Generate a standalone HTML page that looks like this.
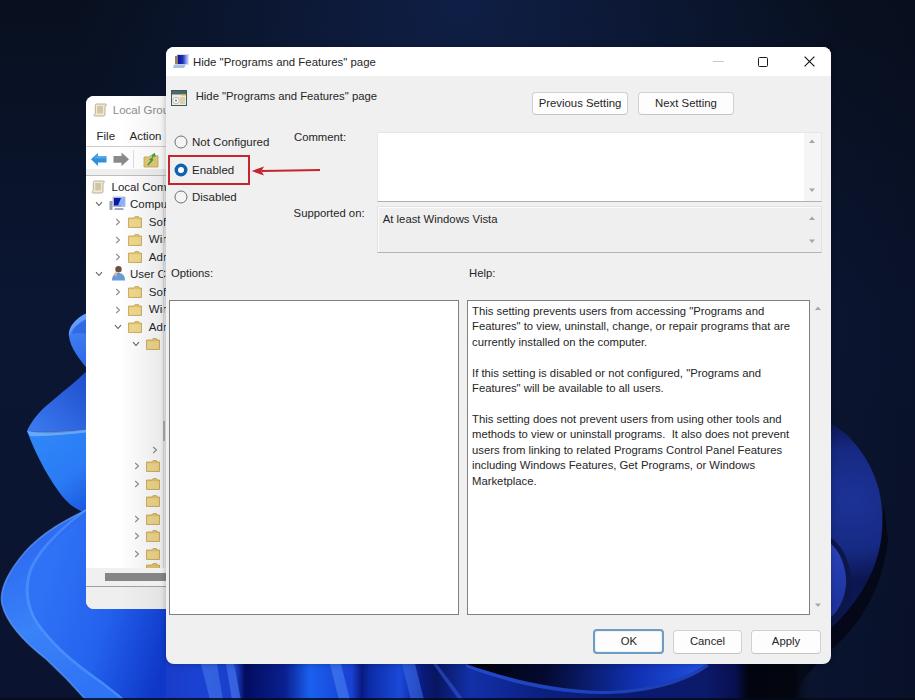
<!DOCTYPE html>
<html><head><meta charset="utf-8">
<style>
*{margin:0;padding:0;box-sizing:border-box}
html,body{width:915px;height:700px;overflow:hidden}
body{position:relative;background:#0a1529;font-family:"Liberation Sans",sans-serif;font-size:11px;color:#262626}
.a{position:absolute}
.t{position:absolute;white-space:nowrap;line-height:15px;height:15px}
#wall{position:absolute;left:0;top:0}
#back{position:absolute;left:86px;top:96px;width:200px;height:513px;background:#fff;border-radius:8px;overflow:hidden}
#dlg{position:absolute;left:166px;top:47px;width:665px;height:617px;background:#f0f0f0;border-radius:8px;overflow:hidden;box-shadow:0 0 6px rgba(0,0,0,.25)}
.btn{position:absolute;background:#fdfdfd;border:1px solid #d0d0d0;border-bottom-color:#c4c4c4;border-radius:4px}
.radio{position:absolute;width:13px;height:13px;border-radius:50%;border:1px solid #8a8a8a;background:#f6f6f6}
</style></head><body>
<svg id="wall" width="915" height="700" viewBox="0 0 915 700">
<defs>
<linearGradient id="bg" x1="0" y1="0" x2="0" y2="700" gradientUnits="userSpaceOnUse">
<stop offset="0" stop-color="#08101f"/><stop offset="0.45" stop-color="#0b1633"/><stop offset="1" stop-color="#0a1430"/></linearGradient>
<radialGradient id="bgc" cx="460" cy="0" r="380" gradientUnits="userSpaceOnUse">
<stop offset="0" stop-color="#10204a" stop-opacity="0.9"/><stop offset="1" stop-color="#10204a" stop-opacity="0"/></radialGradient>
<linearGradient id="bgr" x1="800" y1="0" x2="915" y2="0" gradientUnits="userSpaceOnUse">
<stop offset="0" stop-color="#060c1a" stop-opacity="0"/><stop offset="1" stop-color="#060c1a" stop-opacity="0.35"/></linearGradient>
<linearGradient id="pa" x1="70" y1="315" x2="90" y2="370" gradientUnits="userSpaceOnUse">
<stop offset="0" stop-color="#4a88f5"/><stop offset="1" stop-color="#2a66e8"/></linearGradient>
<linearGradient id="pb" x1="90" y1="375" x2="35" y2="430" gradientUnits="userSpaceOnUse">
<stop offset="0" stop-color="#1f4ecc"/><stop offset="1" stop-color="#3a78ee"/></linearGradient>
<linearGradient id="pbody" x1="35" y1="440" x2="90" y2="505" gradientUnits="userSpaceOnUse">
<stop offset="0" stop-color="#2f86f8"/><stop offset="0.6" stop-color="#2a7af5"/><stop offset="1" stop-color="#1c5ae0"/></linearGradient>
<linearGradient id="rib" x1="0" y1="560" x2="60" y2="700" gradientUnits="userSpaceOnUse">
<stop offset="0" stop-color="#2e6cf2"/><stop offset="0.5" stop-color="#3a82f8"/><stop offset="1" stop-color="#2f74f5"/></linearGradient>
<linearGradient id="ribin" x1="40" y1="600" x2="170" y2="640" gradientUnits="userSpaceOnUse">
<stop offset="0" stop-color="#2f72f5"/><stop offset="0.5" stop-color="#2462ee"/><stop offset="1" stop-color="#0f38c8"/></linearGradient>
<radialGradient id="sph" cx="852" cy="500" r="80" gradientUnits="userSpaceOnUse">
<stop offset="0" stop-color="#1c3398"/><stop offset="0.65" stop-color="#162982"/><stop offset="1" stop-color="#0c1650"/></radialGradient>
<linearGradient id="lobe" x1="831" y1="550" x2="846" y2="600" gradientUnits="userSpaceOnUse">
<stop offset="0" stop-color="#2a42b8"/><stop offset="1" stop-color="#1e34a0"/></linearGradient>
<linearGradient id="lens" x1="480" y1="664" x2="700" y2="680" gradientUnits="userSpaceOnUse">
<stop offset="0" stop-color="#01030e"/><stop offset="0.3" stop-color="#040a30"/><stop offset="0.7" stop-color="#1030b0"/><stop offset="1" stop-color="#2050e0"/></linearGradient>
<linearGradient id="bot" x1="166" y1="0" x2="915" y2="0" gradientUnits="userSpaceOnUse"><stop offset="0.0000" stop-color="#1a3cc8"/><stop offset="0.0454" stop-color="#1a42d2"/><stop offset="0.0935" stop-color="#1a40c8"/><stop offset="0.1055" stop-color="#030c60"/><stop offset="0.1589" stop-color="#0a2090"/><stop offset="0.1923" stop-color="#1a60f0"/><stop offset="0.2190" stop-color="#1a50e0"/><stop offset="0.2483" stop-color="#1a40d0"/><stop offset="0.2617" stop-color="#081a80"/><stop offset="0.2724" stop-color="#0c2ca8"/><stop offset="0.3124" stop-color="#1a4ad8"/><stop offset="0.3418" stop-color="#0a1a80"/><stop offset="0.3605" stop-color="#081660"/><stop offset="0.4059" stop-color="#1230a8"/><stop offset="0.4993" stop-color="#0c2080"/><stop offset="0.6328" stop-color="#0a1a70"/><stop offset="0.7196" stop-color="#0c1a6a"/><stop offset="0.7597" stop-color="#081050"/><stop offset="0.7770" stop-color="#02040f"/><stop offset="0.8398" stop-color="#03060f"/><stop offset="0.8625" stop-color="#0b1526" stop-opacity="0"/><stop offset="1.0000" stop-color="#0b1526" stop-opacity="0"/></linearGradient>
</defs>
<rect width="915" height="700" fill="url(#bg)"/>
<rect width="915" height="400" fill="url(#bgc)"/>
<rect x="800" width="115" height="700" fill="url(#bgr)"/>
<!-- right sphere -->
<path d="M831 560 C860 560 884 530 884 505 L888 540 C882 590 860 625 831 650 C815 664 800 682 790 700 L760 700 C780 680 805 660 831 640 Z" fill="#040818"/>
<path d="M831 424 C852 434 872 462 879 490 C886 522 882 554 868 580 C858 600 844 616 831 628 Z" fill="url(#sph)"/>
<path d="M831 538 C846 548 853 572 851 590 C849 606 841 618 831 626 Z" fill="#0c1648"/>
<path d="M831 544 C841 552 847 570 846 585 C845 598 839 610 831 617 Z" fill="url(#lobe)"/>
<!-- petal A -->
<path d="M90 312 C78 316 68 326 69 336 C70 348 80 360 90 372 Z" fill="url(#pa)"/>
<path d="M90 312 C78 316 68 326 69 336 C72 328 80 320 90 318 Z" fill="#6aa4ff" opacity="0.8"/>
<path d="M90 318 C80 322 73 328 72 334 C78 332 85 333 90 336 Z" fill="#2a5cd8" opacity="0.6"/>
<!-- petal B top face -->
<path d="M90 368 C78 380 60 394 46 406 C36 415 30 424 27 431 C45 433 70 431 90 429 Z" fill="url(#pb)"/>
<!-- petal B body -->
<path d="M27 431 C45 435 70 433 90 429 L90 514 C80 512 70 506 62 496 C50 480 38 460 27 431 Z" fill="url(#pbody)"/>
<path d="M27 431 C45 433 70 431 90 429 L90 432 C70 434 45 437 30 436 Z" fill="#7ab4ff" opacity="0.75"/>
<!-- big ribbon -->
<path d="M200 480 L86 510 C70 518 45 530 25 552 C8 572 -1 590 2 604 C6 622 24 642 45 658 C58 670 72 684 86 700 L260 700 Z" fill="url(#rib)"/>
<path d="M200 480 L86 518 C66 530 42 548 32 570 C26 588 28 606 38 622 C52 642 72 660 96 677 C106 684 116 692 125 700 L260 700 Z" fill="url(#ribin)"/>
<path d="M86 511 C66 526 42 548 32 570 C26 588 28 606 38 622 C52 642 72 660 96 677 C106 684 116 692 125 700 L122 700 C112 692 102 684 93 678 C68 660 48 642 35 622 C25 606 23 588 29 570 C38 548 62 526 86 509 Z" fill="#5a9cff" opacity="0.55"/>
<path d="M86 510 C70 518 45 530 25 552 C8 572 -1 590 2 604 C6 622 24 642 45 658 C58 670 72 684 86 700" fill="none" stroke="#6aa6ff" stroke-width="1.6" opacity="0.6"/>
<!-- bottom strip -->
<rect x="166" y="660" width="749" height="40" fill="url(#bot)"/>
<path d="M201 664 L217 664 L223 700 L210 700 Z" fill="#3f6fe6" opacity="0.7"/>
<path d="M226 664 L234 664 L241 700 L232 700 Z" fill="#4a7aee" opacity="0.6"/>
<path d="M330 664 L341 664 L350 700 L339 700 Z" fill="#4a80f2" opacity="0.6"/>
<path d="M402 664 L415 664 L424 700 L411 700 Z" fill="#3a6ae8" opacity="0.6"/>
<path d="M433 664 L437 664 L464 700 L459 700 Z" fill="#3a60e0" opacity="0.5"/>
<path d="M466 664 C500 676 550 690 602 691 C640 691 680 682 707 664 Z" fill="url(#lens)"/>
<path d="M466 664 C500 676 550 690 602 691 C640 691 680 682 707 664 L709 666 C682 686 640 694 602 694 C550 694 500 680 466 667 Z" fill="#3060f0" opacity="0.55"/>
<rect x="0" y="698" width="915" height="2" fill="#050a18" opacity="0.8"/>
</svg>

<div id="back">
  <div class="a" style="left:0px;top:0px;width:200px;height:51px;background:#fff"></div>
  <svg class="a" style="left:7px;top:7px" width="15" height="14" viewBox="0 0 15 14"><path d="M3.5 1 H12.5 C13.5 1 13.8 2.2 12.8 2.8 L12 3.2 V11.5 C12 12.5 11.2 13 10.5 13 H2 C1 13 0.7 11.8 1.6 11.2 L2.3 10.8 V2.5 C2.3 1.6 2.8 1 3.5 1 Z" fill="#f2ead0" stroke="#a8a088" stroke-width="0.8"/><rect x="4.2" y="3" width="5.8" height="7.5" fill="#cfc6a8"/></svg>
  <div class="t" style="left:26.8px;top:6.9px;font-size:11.5px;color:#8e8e8e">Local Group Policy Editor</div>
  <div class="t" style="left:10.5px;top:32.9px;font-size:11.5px">File</div>
  <div class="t" style="left:43.5px;top:32.9px;font-size:11.5px">Action</div>
  <div class="a" style="left:0px;top:50px;width:200px;height:1px;background:#cfcfcf"></div>
  <div class="a" style="left:0px;top:51px;width:200px;height:22px;background:#fff"></div>
  <div class="a" style="left:0px;top:73px;width:200px;height:6px;background:#efefef"></div>
  <div class="a" style="left:0px;top:79px;width:200px;height:1px;background:#bdbdbd"></div>
  <svg class="a" style="left:4px;top:56px" width="18" height="15" viewBox="0 0 18 15"><path d="M1 7.3 L8 1 V4.3 H16.5 V10.5 H8 V14 Z" fill="#2f8fdc"/><path d="M8 4.3 H16.5 V6.5 H3.5 L8 2.5 Z" fill="#5ab4f0" opacity="0.7"/></svg>
  <svg class="a" style="left:26px;top:56px" width="18" height="15" viewBox="0 0 18 15"><path d="M17 7.3 L9.5 0.6 V4 H1.5 V10.8 H9.5 V14.2 Z" fill="#8a8a8a"/></svg>
  <div class="a" style="left:47px;top:54px;width:1px;height:18px;background:#dedede"></div>
  <svg class="a" style="left:57px;top:56px" width="16" height="16" viewBox="0 0 16 16"><path d="M1 5 H6 L7 3.8 H15 V15 H1 Z" fill="#e6c877" stroke="#c4a650" stroke-width="0.8"/><path d="M4 13 L7.5 8.5 L6 7.5 L9.5 5 L8.5 3 L12 0.8 L12.5 5 L10.8 4.2 L9.5 7 L10.5 7.8 L5.5 13.5 Z" fill="#36a83e"/></svg>
  <svg class="a" style="left:5px;top:84px" width="15" height="14" viewBox="0 0 15 14"><path d="M3.5 1 H12.5 C13.5 1 13.8 2.2 12.8 2.8 L12 3.2 V11.5 C12 12.5 11.2 13 10.5 13 H2 C1 13 0.7 11.8 1.6 11.2 L2.3 10.8 V2.5 C2.3 1.6 2.8 1 3.5 1 Z" fill="#f2ead0" stroke="#a8a088" stroke-width="0.8"/><rect x="4.2" y="3" width="5.8" height="7.5" fill="#cfc6a8"/></svg>
  <div class="t" style="left:25.5px;top:83.7px;font-size:11.5px">Local Computer Policy</div>
  <svg class="a" style="left:9px;top:105.4px" width="8" height="6" viewBox="0 0 8 6"><path d="M1 1.2 L4 4.5 L7 1.2" fill="none" stroke="#606060" stroke-width="1.1"/></svg>
  <svg class="a" style="left:23px;top:100px" width="17" height="15" viewBox="0 0 17 15"><rect x="0.5" y="5" width="3" height="9" fill="#9aa0b0"/><rect x="4" y="1" width="12" height="9.5" fill="#b8c8f0" stroke="#8898c8" stroke-width="0.6"/><rect x="5" y="2" width="7" height="7.5" fill="#0a1aa0"/><path d="M12 2 L15.5 2 V9.5 H9 Z" fill="#8ab0ff"/><path d="M6 12 H14 L15 14 H5 Z" fill="#a0a8c0"/></svg>
  <div class="t" style="left:44.0px;top:101.2px;font-size:11.5px">Computer Configuration</div>
  <svg class="a" style="left:29px;top:122.19999999999999px" width="6" height="8" viewBox="0 0 6 8"><path d="M1.2 1 L4.5 4 L1.2 7" fill="none" stroke="#8c8c8c" stroke-width="1.1"/></svg>
  <svg class="a" style="left:42px;top:120.19999999999999px" width="14" height="12" viewBox="0 0 14 12"><path d="M0.5 2 H6 L7 0.6 H10.5 L11.2 2 H13.5 V11.5 H0.5 Z" fill="#e6c66e" stroke="#c7a44e" stroke-width="0.8"/><rect x="1.1" y="3.2" width="11.8" height="7.7" fill="#f1d98e"/></svg>
  <div class="t" style="left:62.8px;top:118.7px;font-size:11.5px">Software Settings</div>
  <svg class="a" style="left:29px;top:139.7px" width="6" height="8" viewBox="0 0 6 8"><path d="M1.2 1 L4.5 4 L1.2 7" fill="none" stroke="#8c8c8c" stroke-width="1.1"/></svg>
  <svg class="a" style="left:42px;top:137.7px" width="14" height="12" viewBox="0 0 14 12"><path d="M0.5 2 H6 L7 0.6 H10.5 L11.2 2 H13.5 V11.5 H0.5 Z" fill="#e6c66e" stroke="#c7a44e" stroke-width="0.8"/><rect x="1.1" y="3.2" width="11.8" height="7.7" fill="#f1d98e"/></svg>
  <div class="t" style="left:62.8px;top:136.2px;font-size:11.5px">Windows Settings</div>
  <svg class="a" style="left:29px;top:157.2px" width="6" height="8" viewBox="0 0 6 8"><path d="M1.2 1 L4.5 4 L1.2 7" fill="none" stroke="#8c8c8c" stroke-width="1.1"/></svg>
  <svg class="a" style="left:42px;top:155.2px" width="14" height="12" viewBox="0 0 14 12"><path d="M0.5 2 H6 L7 0.6 H10.5 L11.2 2 H13.5 V11.5 H0.5 Z" fill="#e6c66e" stroke="#c7a44e" stroke-width="0.8"/><rect x="1.1" y="3.2" width="11.8" height="7.7" fill="#f1d98e"/></svg>
  <div class="t" style="left:62.8px;top:153.7px;font-size:11.5px">Administrative Templates</div>
  <svg class="a" style="left:9px;top:175.39999999999998px" width="8" height="6" viewBox="0 0 8 6"><path d="M1 1.2 L4 4.5 L7 1.2" fill="none" stroke="#606060" stroke-width="1.1"/></svg>
  <svg class="a" style="left:24px;top:169px" width="16" height="16" viewBox="0 0 16 16"><circle cx="8.5" cy="4.2" r="3.2" fill="#6a5040"/><path d="M2 15.5 C2 10 5 8 8.5 8 C12 8 15 10 15 15.5 Z" fill="#6a9ad8"/><path d="M4 9 C5 7 7 6.5 7 9 L6 12 Z" fill="#e0b090"/></svg>
  <div class="t" style="left:44.0px;top:171.2px;font-size:11.5px">User Configuration</div>
  <svg class="a" style="left:29px;top:192.2px" width="6" height="8" viewBox="0 0 6 8"><path d="M1.2 1 L4.5 4 L1.2 7" fill="none" stroke="#8c8c8c" stroke-width="1.1"/></svg>
  <svg class="a" style="left:42px;top:190.2px" width="14" height="12" viewBox="0 0 14 12"><path d="M0.5 2 H6 L7 0.6 H10.5 L11.2 2 H13.5 V11.5 H0.5 Z" fill="#e6c66e" stroke="#c7a44e" stroke-width="0.8"/><rect x="1.1" y="3.2" width="11.8" height="7.7" fill="#f1d98e"/></svg>
  <div class="t" style="left:62.8px;top:188.7px;font-size:11.5px">Software Settings</div>
  <svg class="a" style="left:29px;top:209.7px" width="6" height="8" viewBox="0 0 6 8"><path d="M1.2 1 L4.5 4 L1.2 7" fill="none" stroke="#8c8c8c" stroke-width="1.1"/></svg>
  <svg class="a" style="left:42px;top:207.7px" width="14" height="12" viewBox="0 0 14 12"><path d="M0.5 2 H6 L7 0.6 H10.5 L11.2 2 H13.5 V11.5 H0.5 Z" fill="#e6c66e" stroke="#c7a44e" stroke-width="0.8"/><rect x="1.1" y="3.2" width="11.8" height="7.7" fill="#f1d98e"/></svg>
  <div class="t" style="left:62.8px;top:206.2px;font-size:11.5px">Windows Settings</div>
  <svg class="a" style="left:28px;top:228.2px" width="8" height="6" viewBox="0 0 8 6"><path d="M1 1.2 L4 4.5 L7 1.2" fill="none" stroke="#606060" stroke-width="1.1"/></svg>
  <svg class="a" style="left:42px;top:225.2px" width="14" height="12" viewBox="0 0 14 12"><path d="M0.5 2 H6 L7 0.6 H10.5 L11.2 2 H13.5 V11.5 H0.5 Z" fill="#e6c66e" stroke="#c7a44e" stroke-width="0.8"/><rect x="1.1" y="3.2" width="11.8" height="7.7" fill="#f1d98e"/></svg>
  <div class="t" style="left:62.8px;top:223.7px;font-size:11.5px">Administrative Templates</div>
  <svg class="a" style="left:46px;top:245px" width="8" height="6" viewBox="0 0 8 6"><path d="M1 1.2 L4 4.5 L7 1.2" fill="none" stroke="#606060" stroke-width="1.1"/></svg>
  <svg class="a" style="left:60px;top:242px" width="14" height="12" viewBox="0 0 14 12"><path d="M0.5 2 H6 L7 0.6 H10.5 L11.2 2 H13.5 V11.5 H0.5 Z" fill="#e6c66e" stroke="#c7a44e" stroke-width="0.8"/><rect x="1.1" y="3.2" width="11.8" height="7.7" fill="#f1d98e"/></svg>
  <svg class="a" style="left:66px;top:350px" width="6" height="8" viewBox="0 0 6 8"><path d="M1.2 1 L4.5 4 L1.2 7" fill="none" stroke="#8c8c8c" stroke-width="1.1"/></svg>
  <svg class="a" style="left:48px;top:366px" width="6" height="8" viewBox="0 0 6 8"><path d="M1.2 1 L4.5 4 L1.2 7" fill="none" stroke="#8c8c8c" stroke-width="1.1"/></svg>
  <svg class="a" style="left:60px;top:364px" width="14" height="12" viewBox="0 0 14 12"><path d="M0.5 2 H6 L7 0.6 H10.5 L11.2 2 H13.5 V11.5 H0.5 Z" fill="#e6c66e" stroke="#c7a44e" stroke-width="0.8"/><rect x="1.1" y="3.2" width="11.8" height="7.7" fill="#f1d98e"/></svg>
  <svg class="a" style="left:48px;top:384px" width="6" height="8" viewBox="0 0 6 8"><path d="M1.2 1 L4.5 4 L1.2 7" fill="none" stroke="#8c8c8c" stroke-width="1.1"/></svg>
  <svg class="a" style="left:60px;top:382px" width="14" height="12" viewBox="0 0 14 12"><path d="M0.5 2 H6 L7 0.6 H10.5 L11.2 2 H13.5 V11.5 H0.5 Z" fill="#e6c66e" stroke="#c7a44e" stroke-width="0.8"/><rect x="1.1" y="3.2" width="11.8" height="7.7" fill="#f1d98e"/></svg>
  <svg class="a" style="left:60px;top:399px" width="14" height="12" viewBox="0 0 14 12"><path d="M0.5 2 H6 L7 0.6 H10.5 L11.2 2 H13.5 V11.5 H0.5 Z" fill="#e6c66e" stroke="#c7a44e" stroke-width="0.8"/><rect x="1.1" y="3.2" width="11.8" height="7.7" fill="#f1d98e"/></svg>
  <svg class="a" style="left:48px;top:419px" width="6" height="8" viewBox="0 0 6 8"><path d="M1.2 1 L4.5 4 L1.2 7" fill="none" stroke="#8c8c8c" stroke-width="1.1"/></svg>
  <svg class="a" style="left:60px;top:417px" width="14" height="12" viewBox="0 0 14 12"><path d="M0.5 2 H6 L7 0.6 H10.5 L11.2 2 H13.5 V11.5 H0.5 Z" fill="#e6c66e" stroke="#c7a44e" stroke-width="0.8"/><rect x="1.1" y="3.2" width="11.8" height="7.7" fill="#f1d98e"/></svg>
  <svg class="a" style="left:48px;top:436px" width="6" height="8" viewBox="0 0 6 8"><path d="M1.2 1 L4.5 4 L1.2 7" fill="none" stroke="#8c8c8c" stroke-width="1.1"/></svg>
  <svg class="a" style="left:60px;top:434px" width="14" height="12" viewBox="0 0 14 12"><path d="M0.5 2 H6 L7 0.6 H10.5 L11.2 2 H13.5 V11.5 H0.5 Z" fill="#e6c66e" stroke="#c7a44e" stroke-width="0.8"/><rect x="1.1" y="3.2" width="11.8" height="7.7" fill="#f1d98e"/></svg>
  <svg class="a" style="left:48px;top:454px" width="6" height="8" viewBox="0 0 6 8"><path d="M1.2 1 L4.5 4 L1.2 7" fill="none" stroke="#8c8c8c" stroke-width="1.1"/></svg>
  <svg class="a" style="left:60px;top:452px" width="14" height="12" viewBox="0 0 14 12"><path d="M0.5 2 H6 L7 0.6 H10.5 L11.2 2 H13.5 V11.5 H0.5 Z" fill="#e6c66e" stroke="#c7a44e" stroke-width="0.8"/><rect x="1.1" y="3.2" width="11.8" height="7.7" fill="#f1d98e"/></svg>
  <div class="a" style="left:60px;top:467px;width:14px;height:5px;overflow:hidden"><svg class="a" style="left:0;top:0" width="14" height="12" viewBox="0 0 14 12"><path d="M0.5 2 H6 L7 0.6 H10.5 L11.2 2 H13.5 V11.5 H0.5 Z" fill="#e6c66e" stroke="#c7a44e" stroke-width="0.8"/></svg></div>
  <div class="a" style="left:0px;top:472px;width:200px;height:19px;background:#f0f0f0"></div>
  <div class="a" style="left:19px;top:477px;width:181px;height:8px;background:#858585"></div>
  <div class="a" style="left:0px;top:490px;width:200px;height:1px;background:#a0a0a0"></div>
  <div class="a" style="left:0px;top:491px;width:200px;height:22px;background:#efefef"></div>
  <div class="a" style="left:34px;top:80px;width:46px;height:392px;background:linear-gradient(90deg,rgba(0,0,0,0),rgba(0,0,0,.09))"></div>
  <div class="a" style="left:34px;top:0px;width:46px;height:80px;background:linear-gradient(90deg,rgba(0,0,0,0),rgba(0,0,0,.05))"></div>
  <div class="a" style="left:34px;top:491px;width:46px;height:22px;background:linear-gradient(90deg,rgba(0,0,0,0),rgba(0,0,0,.05))"></div>
  <div class="a" style="left:77px;top:80px;width:1px;height:392px;background:#d2d2d2"></div>
  <div class="a" style="left:77px;top:325px;width:2px;height:20px;background:#a8a8a8"></div>
</div>

<div id="dlg">
  <div class="a" style="left:0px;top:0px;width:665px;height:29px;background:#fff"></div>
  <svg class="a" style="left:7px;top:6px" width="17" height="16" viewBox="0 0 17 16"><defs><linearGradient id="scr" x1="0" y1="0" x2="1" y2="0"><stop offset="0" stop-color="#0a1490"/><stop offset="0.5" stop-color="#1a30c0"/><stop offset="1" stop-color="#c0d0f0"/></linearGradient></defs><rect x="3.5" y="1" width="12.5" height="11" fill="#d8e0f0"/><rect x="4.5" y="2" width="10.5" height="9" fill="url(#scr)"/><rect x="2" y="3" width="2.5" height="8" fill="#a08050"/><path d="M1 11.5 H13 L11 15 H0 Z" fill="#a8c0e0"/></svg>
  <div class="t" style="left:27.0px;top:7.5px;font-size:11.4px">Hide "Programs and Features" page</div>
  <div class="a" style="left:547px;top:14px;width:11px;height:1px;background:#c8c8c8"></div>
  <div class="a" style="left:592px;top:10px;width:10px;height:10px;border:1.3px solid #1a1a1a;border-radius:1.5px"></div>
  <svg class="a" style="left:638px;top:9px" width="11" height="11" viewBox="0 0 11 11"><path d="M0.6 0.6 L10.4 10.4 M10.4 0.6 L0.6 10.4" stroke="#1a1a1a" stroke-width="1.2"/></svg>
  <svg class="a" style="left:5px;top:43px" width="16" height="16" viewBox="0 0 16 16"><rect x="0.5" y="0.5" width="15" height="15" fill="#f0ecd8" stroke="#3a5a60" stroke-width="1"/><rect x="1" y="1" width="14" height="3.5" fill="#4a6870"/><rect x="10" y="4" width="5" height="1.5" fill="#c8b060"/><circle cx="5" cy="10.5" r="3.2" fill="#fafafa" stroke="#909890" stroke-width="0.6"/><circle cx="5" cy="10.5" r="0.9" fill="#606860"/><rect x="9" y="7" width="5" height="7" fill="#d8d0a8"/></svg>
  <div class="t" style="left:29.7px;top:41.6px;font-size:11.3px">Hide "Programs and Features" page</div>
  <div class="btn" style="left:366px;top:45px;width:96px;height:23px;"></div>
  <div class="t" style="left:314.0px;width:200px;text-align:center;top:49.4px;font-size:11.35px">Previous Setting</div>
  <div class="btn" style="left:472px;top:45px;width:96px;height:23px;"></div>
  <div class="t" style="left:420.0px;width:200px;text-align:center;top:49.1px;font-size:11.35px">Next Setting</div>
  <svg class="a" style="left:8px;top:88.30000000000001px" width="14" height="14" viewBox="0 0 14 14"><circle cx="7" cy="7" r="6" fill="#f4f4f4" stroke="#707070" stroke-width="1"/></svg>
  <div class="t" style="left:26.0px;top:88.4px;font-size:11.5px">Not Configured</div>
  <svg class="a" style="left:8px;top:115.69999999999999px" width="14" height="14" viewBox="0 0 14 14"><circle cx="7" cy="7" r="6.5" fill="#0f62b0"/><circle cx="7" cy="7" r="3" fill="#fff"/></svg>
  <div class="t" style="left:26.0px;top:115.8px;font-size:11.5px">Enabled</div>
  <svg class="a" style="left:8px;top:142.8px" width="14" height="14" viewBox="0 0 14 14"><circle cx="7" cy="7" r="6" fill="#f4f4f4" stroke="#707070" stroke-width="1"/></svg>
  <div class="t" style="left:26.0px;top:142.9px;font-size:11.5px">Disabled</div>
  <div class="a" style="left:2px;top:108px;width:82px;height:30px;border:2px solid #c4262e"></div>
  <svg class="a" style="left:84px;top:118px" width="72" height="12" viewBox="0 0 72 12"><path d="M12 6 L70 5" stroke="#c4262e" stroke-width="2"/><path d="M1.5 6 L14 1.5 L11.5 6 L14 10.5 Z" fill="#c4262e"/></svg>
  <div class="t" style="left:128.0px;top:83.2px;font-size:11.3px">Comment:</div>
  <div class="a" style="left:211px;top:85px;width:445px;height:70px;background:#fff;border:1px solid #e6e6e6;border-bottom:1px solid #b0b0b0"></div>
  <div class="a" style="left:638px;top:86px;width:17px;height:68px;background:#f5f5f5"></div>
  <svg class="a" style="left:642px;top:91px" width="8" height="7" viewBox="0 0 8 7"><path d="M1 5 L4 1.5 L7 5 Z" fill="#a6a6a6"/></svg>
  <svg class="a" style="left:642px;top:140px" width="8" height="7" viewBox="0 0 8 7"><path d="M1 1.5 L4 5 L7 1.5 Z" fill="#a6a6a6"/></svg>
  <div class="t" style="left:127.6px;top:159.2px;font-size:11.3px">Supported on:</div>
  <div class="a" style="left:211px;top:159px;width:445px;height:47px;background:#efefef;border:1px solid #e2e2e2;border-bottom:1px solid #b4b4b4;box-shadow:inset 1px 1px 0 #fbfbfb"></div>
  <svg class="a" style="left:642px;top:168px" width="8" height="7" viewBox="0 0 8 7"><path d="M1 5 L4 1.5 L7 5 Z" fill="#a6a6a6"/></svg>
  <svg class="a" style="left:642px;top:191px" width="8" height="7" viewBox="0 0 8 7"><path d="M1 1.5 L4 5 L7 1.5 Z" fill="#a6a6a6"/></svg>
  <div class="t" style="left:216.8px;top:165.2px;font-size:11.3px">At least Windows Vista</div>
  <div class="t" style="left:5.0px;top:219.1px;font-size:11.3px">Options:</div>
  <div class="t" style="left:303.0px;top:219.0px;font-size:11.3px">Help:</div>
  <div class="a" style="left:3px;top:253px;width:290px;height:315px;background:#fff;border:1px solid #808080"></div>
  <div class="a" style="left:301px;top:253px;width:343px;height:315px;background:#fff;border:1px solid #808080"></div>
  <svg class="a" style="left:648px;top:258px" width="8" height="7" viewBox="0 0 8 7"><path d="M1 5 L4 1.5 L7 5 Z" fill="#a6a6a6"/></svg>
  <svg class="a" style="left:648px;top:555px" width="8" height="7" viewBox="0 0 8 7"><path d="M1 1.5 L4 5 L7 1.5 Z" fill="#a6a6a6"/></svg>
  <div class="t" style="left:306.0px;top:256.7px;font-size:11.3px">This setting prevents users from accessing "Programs and</div>
  <div class="t" style="left:306.0px;top:272.1px;font-size:11.3px">Features" to view, uninstall, change, or repair programs that are</div>
  <div class="t" style="left:306.0px;top:287.6px;font-size:11.3px">currently installed on the computer.</div>
  <div class="t" style="left:306.0px;top:318.5px;font-size:11.3px">If this setting is disabled or not configured, "Programs and</div>
  <div class="t" style="left:306.0px;top:333.9px;font-size:11.3px">Features" will be available to all users.</div>
  <div class="t" style="left:306.0px;top:364.8px;font-size:11.3px">This setting does not prevent users from using other tools and</div>
  <div class="t" style="left:306.0px;top:380.3px;font-size:11.3px">methods to view or uninstall programs.&nbsp; It also does not prevent</div>
  <div class="t" style="left:306.0px;top:395.7px;font-size:11.3px">users from linking to related Programs Control Panel Features</div>
  <div class="t" style="left:306.0px;top:411.2px;font-size:11.3px">including Windows Features, Get Programs, or Windows</div>
  <div class="t" style="left:306.0px;top:426.6px;font-size:11.3px">Marketplace.</div>
  <div class="btn" style="left:427px;top:582px;width:71px;height:25px;border:2px solid #6f9cc2;border-radius:4px;box-shadow:inset 0 0 0 1px #eaf3fa"></div>
  <div class="t" style="left:363.0px;width:200px;text-align:center;top:587.2px;font-size:11.3px">OK</div>
  <div class="btn" style="left:507px;top:583px;width:69px;height:24px;"></div>
  <div class="t" style="left:441.5px;width:200px;text-align:center;top:587.2px;font-size:11.3px">Cancel</div>
  <div class="btn" style="left:585px;top:583px;width:70px;height:24px;"></div>
  <div class="t" style="left:520.0px;width:200px;text-align:center;top:587.2px;font-size:11.3px">Apply</div>
</div>
</body></html>
